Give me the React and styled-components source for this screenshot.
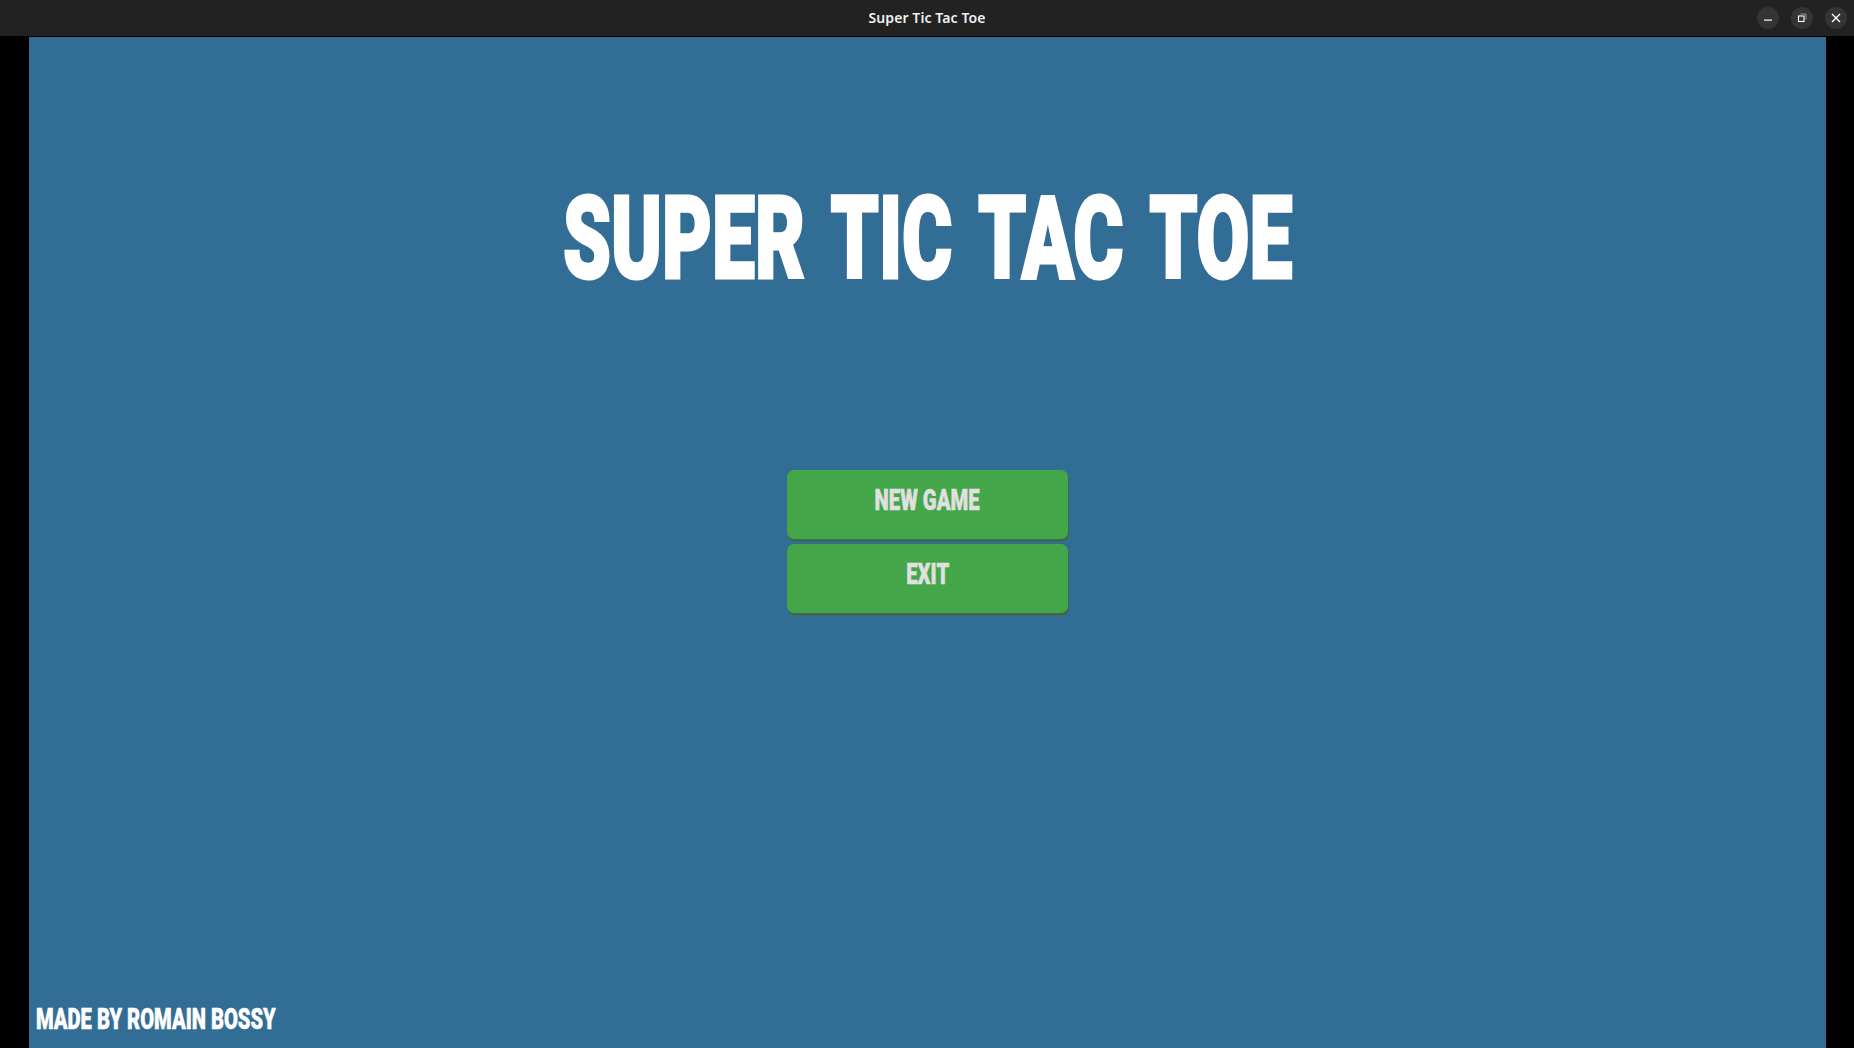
import React from "react";
import styled, { createGlobalStyle } from "styled-components";

const Global = createGlobalStyle`
  html, body { margin: 0; padding: 0; height: 100%; background: #000; overflow: hidden; }
  #root { height: 100%; }
`;

const Window = styled.div`
  display: flex;
  flex-direction: column;
  width: 1854px;
  height: 1048px;
  background: #000;
`;

const TitleBar = styled.header`
  position: relative;
  flex: none;
  display: flex;
  align-items: center;
  justify-content: center;
  height: 36px;
  border-bottom: 1px solid #000;
  background: #222222;
`;

const WindowTitle = styled.h1`
  margin: 0 0 1px;
  font: 600 14px "Noto Sans", sans-serif;
  color: #f0f0f0;
  letter-spacing: 0.1px;
`;

const Controls = styled.div`
  position: absolute;
  top: 7px;
  right: 7px;
  display: flex;
  gap: 12px;
`;

const ControlButton = styled.div`
  width: 22px;
  height: 22px;
  border-radius: 50%;
  background: #343434;
  display: flex;
  align-items: center;
  justify-content: center;
  color: #fff;
`;

const Stage = styled.main`
  flex: 1;
  margin: 0 28px 0 29px;
  background: #326d96;
  display: flex;
  flex-direction: column;
  align-items: center;
  overflow: hidden;
`;

const GameTitle = styled.div`
  margin-top: 152px;
  height: 100px;
  display: flex;
  align-items: center;
  justify-content: center;
  white-space: nowrap;
  font: 900 115px/100px Roboto, sans-serif;
  word-spacing: 13px;
  color: #fff;
  -webkit-text-stroke: 3px #fff;
`;

const Squeezed = styled.span`
  display: inline-block;
  transform: scaleX(${(p) => p.$x});
  transform-origin: ${(p) => p.$origin || "center"};
`;

const Menu = styled.nav`
  margin-top: 181px;
  display: flex;
  flex-direction: column;
  gap: 5px;
`;

const MenuButton = styled.div`
  width: 281px;
  height: 69px;
  box-sizing: border-box;
  padding-top: 15px;
  border-radius: 7px;
  background: #43a648;
  box-shadow: 1px 2.5px 0.5px #3f6846;
  display: flex;
  justify-content: center;
  font: 900 29px/30px Roboto, sans-serif;
  -webkit-text-stroke: 0.5px #e0e0e0;
  color: #e0e0e0;
  white-space: nowrap;
`;

const Credit = styled.footer`
  margin-top: auto;
  align-self: flex-start;
  padding: 0 0 14px 7px;
  font: 900 29px/29px Roboto, sans-serif;
  -webkit-text-stroke: 0.5px #fff;
  color: #fff;
  white-space: nowrap;
`;

export default function App() {
  return (
    <Window>
      <Global />
      <TitleBar>
        <WindowTitle>Super Tic Tac Toe</WindowTitle>
        <Controls>
          <ControlButton>
            <svg width="10" height="10" viewBox="0 0 10 10">
              <rect x="1" y="6.5" width="8" height="1.2" fill="currentColor" />
            </svg>
          </ControlButton>
          <ControlButton>
            <svg width="10" height="10" viewBox="0 0 10 10" fill="none" stroke="currentColor">
              <rect x="1.5" y="3" width="5.5" height="5.5" strokeWidth="1.1" />
              <path d="M3.5 1H9v5.5" strokeWidth="0.8" opacity="0.6" />
            </svg>
          </ControlButton>
          <ControlButton>
            <svg width="10" height="10" viewBox="0 0 10 10" fill="none" stroke="currentColor" strokeWidth="1.4">
              <path d="M1 1l8 8M9 1l-8 8" />
            </svg>
          </ControlButton>
        </Controls>
      </TitleBar>
      <Stage>
        <GameTitle>
          <Squeezed $x={0.667}>SUPER TIC TAC TOE</Squeezed>
        </GameTitle>
        <Menu>
          <MenuButton><Squeezed $x={0.7}>NEW GAME</Squeezed></MenuButton>
          <MenuButton><Squeezed $x={0.7}>EXIT</Squeezed></MenuButton>
        </Menu>
        <Credit><Squeezed $x={0.695} $origin="left">MADE BY ROMAIN BOSSY</Squeezed></Credit>
      </Stage>
    </Window>
  );
}
